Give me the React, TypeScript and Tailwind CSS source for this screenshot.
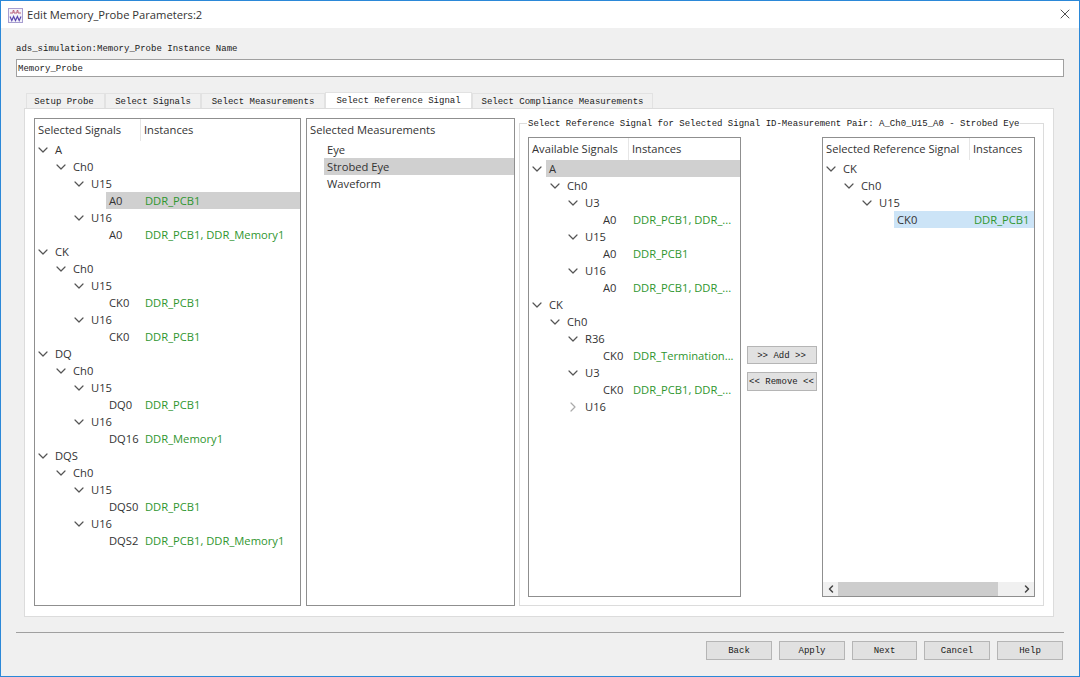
import { ChevronDown, ChevronRight, ChevronLeft, X } from "lucide-react"

type Row = {
  depth: number
  label: string
  inst?: string
  open?: boolean
  leaf?: boolean
  sel?: "gray" | "blue"
}

const DOT = "font-['Liberation_Mono',monospace] text-[9px] text-[#1a1a1a]"

const signals: Row[] = [
  { depth: 0, label: "A", open: true },
  { depth: 1, label: "Ch0", open: true },
  { depth: 2, label: "U15", open: true },
  { depth: 3, label: "A0", inst: "DDR_PCB1", leaf: true, sel: "gray" },
  { depth: 2, label: "U16", open: true },
  { depth: 3, label: "A0", inst: "DDR_PCB1, DDR_Memory1", leaf: true },
  { depth: 0, label: "CK", open: true },
  { depth: 1, label: "Ch0", open: true },
  { depth: 2, label: "U15", open: true },
  { depth: 3, label: "CK0", inst: "DDR_PCB1", leaf: true },
  { depth: 2, label: "U16", open: true },
  { depth: 3, label: "CK0", inst: "DDR_PCB1", leaf: true },
  { depth: 0, label: "DQ", open: true },
  { depth: 1, label: "Ch0", open: true },
  { depth: 2, label: "U15", open: true },
  { depth: 3, label: "DQ0", inst: "DDR_PCB1", leaf: true },
  { depth: 2, label: "U16", open: true },
  { depth: 3, label: "DQ16", inst: "DDR_Memory1", leaf: true },
  { depth: 0, label: "DQS", open: true },
  { depth: 1, label: "Ch0", open: true },
  { depth: 2, label: "U15", open: true },
  { depth: 3, label: "DQS0", inst: "DDR_PCB1", leaf: true },
  { depth: 2, label: "U16", open: true },
  { depth: 3, label: "DQS2", inst: "DDR_PCB1, DDR_Memory1", leaf: true },
]

const measurements: Row[] = [
  { depth: 0, label: "Eye", leaf: true },
  { depth: 0, label: "Strobed Eye", leaf: true, sel: "gray" },
  { depth: 0, label: "Waveform", leaf: true },
]

const available: Row[] = [
  { depth: 0, label: "A", open: true, sel: "gray" },
  { depth: 1, label: "Ch0", open: true },
  { depth: 2, label: "U3", open: true },
  { depth: 3, label: "A0", inst: "DDR_PCB1, DDR_...", leaf: true },
  { depth: 2, label: "U15", open: true },
  { depth: 3, label: "A0", inst: "DDR_PCB1", leaf: true },
  { depth: 2, label: "U16", open: true },
  { depth: 3, label: "A0", inst: "DDR_PCB1, DDR_...", leaf: true },
  { depth: 0, label: "CK", open: true },
  { depth: 1, label: "Ch0", open: true },
  { depth: 2, label: "R36", open: true },
  { depth: 3, label: "CK0", inst: "DDR_Termination...", leaf: true },
  { depth: 2, label: "U3", open: true },
  { depth: 3, label: "CK0", inst: "DDR_PCB1, DDR_...", leaf: true },
  { depth: 2, label: "U16" },
]

const reference: Row[] = [
  { depth: 0, label: "CK", open: true },
  { depth: 1, label: "Ch0", open: true },
  { depth: 2, label: "U15", open: true },
  { depth: 3, label: "CK0", inst: "DDR_PCB1", leaf: true, sel: "blue" },
]

function TreeRow({ row, column }: { row: Row; column: number }) {
  const indent = row.depth * 18
  return (
    <div className="flex h-[17px] items-center">
      <div className="flex h-[17px] shrink-0 items-center justify-end" style={{ width: 17 + indent }}>
        {!row.leaf &&
          (row.open ? (
            <ChevronDown className="mr-[1px] h-4 w-4 text-[#555]" strokeWidth={1.8} />
          ) : (
            <ChevronRight className="mr-[1px] h-4 w-4 text-[#aaa]" strokeWidth={1.8} />
          ))}
      </div>
      <div
        className={`flex h-[17px] min-w-0 flex-1 items-center whitespace-nowrap pl-[3px] ${
          row.sel === "gray" ? "bg-[#d0d0d0]" : row.sel === "blue" ? "bg-[#cce4f7]" : ""
        }`}
      >
        <span className="shrink-0" style={{ width: column - 17 - indent - 3 }}>
          {row.label}
        </span>
        <span className="text-[#2f962f]">{row.inst}</span>
      </div>
    </div>
  )
}

function Tree({
  title,
  rows,
  column,
  className,
  scroll,
}: {
  title: string
  rows: Row[]
  column?: number
  className: string
  scroll?: boolean
}) {
  return (
    <div className={`flex flex-col border border-[#8f8f8f] bg-white text-[#333] ${className}`}>
      <div className="flex h-[22px] shrink-0 items-center whitespace-nowrap">
        {column ? (
          <>
            <div className="flex h-full items-center border-r border-[#e6e6e6] pl-[3px]" style={{ width: column - 4 }}>
              {title}
            </div>
            <div className="pl-[3px]">Instances</div>
          </>
        ) : (
          <div className="pl-[3px]">{title}</div>
        )}
      </div>
      <div className="min-h-0 flex-1 overflow-hidden">
        {rows.map((row, i) => (
          <TreeRow key={i} row={row} column={column ?? 200} />
        ))}
      </div>
      {scroll && (
        <div className="flex h-[14px] shrink-0 items-center bg-[#f0f0f0]">
          <div className="flex w-[15px] justify-center">
            <ChevronLeft className="h-3 w-3 text-[#444]" strokeWidth={3} />
          </div>
          <div className="h-full w-[160px] bg-[#cdcdcd]" />
          <div className="flex flex-1 justify-end pr-[1px]">
            <ChevronRight className="h-3 w-3 text-[#444]" strokeWidth={3} />
          </div>
        </div>
      )}
    </div>
  )
}

function DialogButton({ label, className }: { label: string; className: string }) {
  return (
    <button className={`flex items-center justify-center whitespace-nowrap border border-[#b5b5b5] bg-[#e1e1e1] pt-[2px] ${DOT} ${className}`}>
      {label}
    </button>
  )
}

function Tab({ label, className, active }: { label: string; className: string; active?: boolean }) {
  return (
    <div
      className={`flex items-center justify-center whitespace-nowrap border border-b-0 border-[#e2e2e2] ${DOT} ${className} ${
        active ? "h-[16px] bg-white pt-[1px]" : "h-[15px] bg-[#f0f0f0] pt-[2px]"
      }`}
    >
      {label}
    </div>
  )
}

function AppIcon() {
  return (
    <svg width="15" height="15" viewBox="0 0 15 15" fill="none" className="mt-[1px] shrink-0">
      <rect x="0.5" y="0.5" width="14" height="14" fill="#f4f2fa" stroke="#a79fd0" />
      <path d="M2 5h3V2.5h1V5h3V2.5h1V5h3" stroke="#b8607a" strokeWidth="1" />
      <path d="M2 8.5l1.8 4 1.8-4 1.9 4 1.9-4 1.8 4 1.8-4" stroke="#5a48b0" strokeWidth="1.2" />
    </svg>
  )
}

export default function App() {
  return (
    <div className="flex h-[677px] w-[1080px] flex-col border border-[#2b88d8] bg-[#f0f0f0] font-['Open_Sans',sans-serif] text-[11.2px] leading-none">
      <div className="flex h-[27px] shrink-0 items-center bg-white pl-[7px] pr-[6px]">
        <AppIcon />
        <span className="ml-[4px] flex-1 text-[#333]">Edit Memory_Probe Parameters:2</span>
        <X className="-mt-[2px] h-4 w-4 text-[#333]" strokeWidth={1.3} />
      </div>

      <div className="flex min-h-0 flex-1 flex-col px-[15px]">
        <div className={`mt-[17px] h-[9px] ${DOT}`}>ads_simulation:Memory_Probe Instance Name</div>
        <div className={`mt-[5px] flex h-[18px] items-center border border-[#a0a0a0] bg-white pl-[1px] pt-[2px] ${DOT}`}>Memory_Probe</div>

        <div className="ml-[10px] mt-[15px] flex items-end pr-[10px]">
          <Tab label="Setup Probe" className="w-[79px] pr-[3px]" />
          <Tab label="Select Signals" className="w-[96px]" />
          <Tab label="Select Measurements" className="w-[124px]" />
          <Tab label="Select Reference Signal" className="w-[147px]" active />
          <Tab label="Select Compliance Measurements" className="w-[181px]" />
        </div>

        <div className="ml-[8px] mr-[10px] flex h-[509px] shrink-0 gap-[5px] border border-[#dcdcdc] bg-white pb-[10px] pl-[9px] pr-[9px] pt-[9px]">
          <Tree title="Selected Signals" rows={signals} column={110} className="w-[267px]" />
          <Tree title="Selected Measurements" rows={measurements} className="w-[209px]" />
          <fieldset className="-mt-[1px] ml-[-1px] flex min-w-0 flex-1 border border-[#dcdcdc]">
            <legend className={`ml-[7px] h-[12px] px-[1px] leading-[14px] ${DOT}`}>
              Select Reference Signal for Selected Signal ID-Measurement Pair: A_Ch0_U15_A0 - Strobed Eye
            </legend>
            <div className="flex h-[468px] w-full pl-[8px] pr-[8px] pt-[8px]">
              <Tree title="Available Signals" rows={available} column={104} className="w-[213px]" />
              <div className="flex flex-1 flex-col items-center justify-center gap-[8px] pt-[3px]">
                <DialogButton label=">> Add >>" className="h-[18px] w-[70px]" />
                <DialogButton label="<< Remove <<" className="h-[19px] w-[70px]" />
              </div>
              <Tree title="Selected Reference Signal" rows={reference} column={151} className="w-[213px]" scroll />
            </div>
          </fieldset>
        </div>

        <div className="mt-[15px] h-[1px] bg-[#a0a0a0]" />
        <div className="mt-[8px] flex justify-end gap-[7px] pr-[1px]">
          <DialogButton label="Back" className="h-[19px] w-[66px]" />
          <DialogButton label="Apply" className="h-[19px] w-[66px]" />
          <DialogButton label="Next" className="h-[19px] w-[65px]" />
          <DialogButton label="Cancel" className="h-[19px] w-[66px]" />
          <DialogButton label="Help" className="h-[19px] w-[66px]" />
        </div>
      </div>
    </div>
  )
}
